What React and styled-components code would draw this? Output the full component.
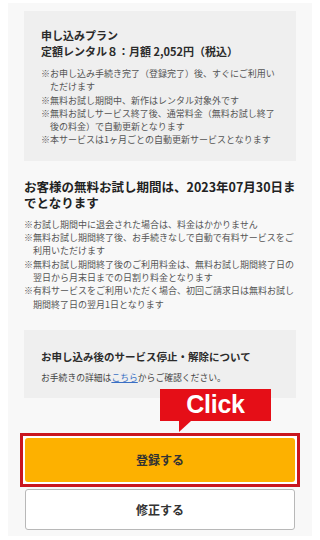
import React from "react";
import styled, { createGlobalStyle } from "styled-components";

const Global = createGlobalStyle`
  html, body { margin: 0; padding: 0; background: #ffffff; }
  body {
    font-family: "Noto Sans CJK JP", "Noto Sans", sans-serif;
    color: #333333;
    -webkit-font-smoothing: antialiased;
  }
`;

const Page = styled.div`
  margin: 3px 8px 0;
  background: #f8f8f8;
  padding: 8px 16px 6px;
  width: 304px;
  box-sizing: border-box;
`;

const GrayBox = styled.section`
  background: #efefef;
  padding: ${(p) => p.$pad};
  margin-top: ${(p) => p.$mt || "0"};
`;

const PlanTitle = styled.h2`
  margin: 0;
  font-size: 11px;
  line-height: 16px;
  font-weight: 700;
  color: #2b2b2b;
`;

const Notes = styled.ul`
  list-style: none;
  margin: ${(p) => p.$mt || "0"} 0 0;
  padding: 0;
`;

const Note = styled.li`
  font-size: 9px;
  line-height: 13.3px;
  color: #555555;
  padding-left: 1em;
  text-indent: -1em;
  white-space: nowrap;
`;

const TrialBlock = styled.section`
  margin-top: 18px;
`;

const TrialHeading = styled.h2`
  margin: 0;
  font-size: 12.5px;
  line-height: 16px;
  font-weight: 700;
  color: #222222;
  white-space: nowrap;
`;

const InfoTitle = styled.h3`
  margin: 0;
  font-size: 10.5px;
  line-height: 14px;
  font-weight: 700;
  color: #2b2b2b;
`;

const InfoText = styled.p`
  margin: 7px 0 0;
  font-size: 8.8px;
  line-height: 13px;
  color: #444444;
`;

const Link = styled.a`
  color: #3a6fc4;
  text-decoration: underline;
`;

const ButtonArea = styled.div`
  position: relative;
  margin-top: 35px;
`;

const Highlight = styled.div`
  margin: 0 -4px;
  border: 3px solid #c9161e;
  padding: 2px;
  background: #ffffff;
`;

const Button = styled.button`
  display: flex;
  align-items: center;
  justify-content: center;
  width: ${(p) => (p.$primary ? "100%" : "270px")};
  margin: ${(p) => (p.$primary ? "0" : "2px 1px 0")};
  height: ${(p) => (p.$primary ? "44px" : "41px")};
  border-radius: 3px;
  border: ${(p) => (p.$primary ? "none" : "1px solid #b8b8b8")};
  background: ${(p) => (p.$primary ? "#fdb100" : "#ffffff")};
  font-family: "Noto Sans CJK JP", sans-serif;
  font-size: 12px;
  font-weight: 700;
  color: #333333;
  padding: 0;
  box-sizing: border-box;
`;

const Callout = styled.div`
  position: absolute;
  left: 136px;
  bottom: calc(100% + 12px);
  width: 111px;
  height: 32px;
  background: #e50e17;
  color: #ffffff;
  font-family: "Liberation Sans", Arial, sans-serif;
  font-weight: 700;
  font-size: 25px;
  letter-spacing: -0.3px;
  display: flex;
  align-items: center;
  justify-content: center;
  &::after {
    content: "";
    position: absolute;
    left: 19px;
    top: 100%;
    border-left: 0 solid transparent;
    border-right: 12px solid transparent;
    border-top: 11px solid #e50e17;
  }
`;

const planNotes = [
  ["※お申し込み手続き完了（登録完了）後、すぐにご利用い", "ただけます"],
  ["※無料お試し期間中、新作はレンタル対象外です"],
  ["※無料お試しサービス終了後、通常料金（無料お試し終了", "後の料金）で自動更新となります"],
  ["※本サービスは1ヶ月ごとの自動更新サービスとなります"],
];

const trialNotes = [
  ["※お試し期間中に退会された場合は、料金はかかりません"],
  ["※無料お試し期間終了後、お手続きなしで自動で有料サービスをご", "利用いただけます"],
  ["※無料お試し期間終了後のご利用料金は、無料お試し期間終了日の", "翌日から月末日までの日割り料金となります"],
  ["※有料サービスをご利用いただく場合、初回ご請求日は無料お試し", "期間終了日の翌月1日となります"],
];

const renderNotes = (list) =>
  list.map((lines, i) => (
    <Note key={i}>
      {lines.map((l, j) => (
        <React.Fragment key={j}>
          {j > 0 && <br />}
          {l}
        </React.Fragment>
      ))}
    </Note>
  ));

export default function App() {
  return (
    <>
      <Global />
      <Page>
        <GrayBox $pad="16px 17px 14px">
          <PlanTitle>申し込みプラン</PlanTitle>
          <PlanTitle>定額レンタル８：月額 2,052円（税込）</PlanTitle>
          <Notes $mt="8px">{renderNotes(planNotes)}</Notes>
        </GrayBox>

        <TrialBlock>
          <TrialHeading>
            お客様の無料お試し期間は、2023年07月30日ま
            <br />
            でとなります
          </TrialHeading>
          <Notes $mt="7px">{renderNotes(trialNotes)}</Notes>
        </TrialBlock>

        <GrayBox $pad="20px 17px 14px" $mt="19px">
          <InfoTitle>お申し込み後のサービス停止・解除について</InfoTitle>
          <InfoText>
            お手続きの詳細は<Link href="#">こちら</Link>からご確認ください。
          </InfoText>
        </GrayBox>

        <ButtonArea>
          <Callout>Click</Callout>
          <Highlight>
            <Button $primary>登録する</Button>
          </Highlight>
          <Button>修正する</Button>
        </ButtonArea>
      </Page>
    </>
  );
}
